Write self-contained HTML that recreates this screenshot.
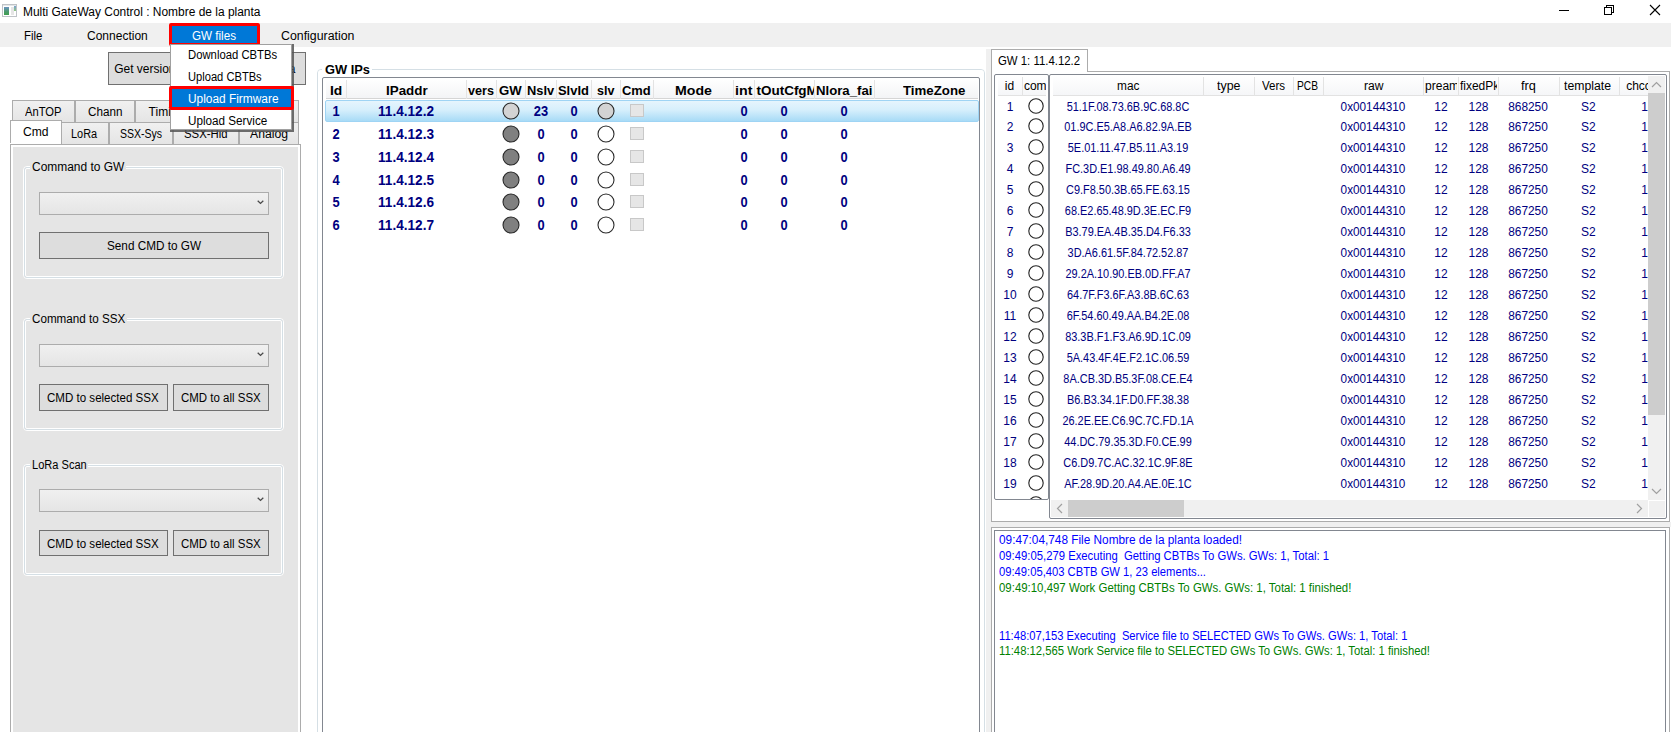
<!DOCTYPE html>
<html><head><meta charset="utf-8"><style>
html,body{margin:0;padding:0}
body{width:1671px;height:732px;position:relative;overflow:hidden;background:#fff;font-family:"Liberation Sans",sans-serif;font-size:12px;line-height:12px;color:#000}
body div, body svg{position:absolute}
.t{white-space:pre}
</style></head><body>
<div style="left:2px;top:4px;width:15px;height:13px;border:1px solid #bfc3c7;box-sizing:border-box;background:#fff"></div>
<div style="left:3px;top:5px;width:13px;height:1px;background:#e4e6e8"></div>
<div style="left:4px;top:7px;width:5px;height:8px;background:linear-gradient(#6a92c0,#4a9a6a 60%,#40a050)"></div>
<div style="left:11px;top:7px;width:3px;height:8px;background:#e6e6e6"></div>
<div style="left:14px;top:6px;width:2px;height:5px;background:linear-gradient(#7aa0d0,#90c880)"></div>
<div class="t" style="top:6.04px;font-size:12px;line-height:12px;font-weight:400;color:#000;left:23.40px;transform-origin:0 0;transform:scaleX(0.9965);">Multi GateWay Control : Nombre de la planta</div>
<div style="left:1559px;top:10px;width:10px;height:1px;background:#000"></div>
<div style="left:1606px;top:5px;width:8px;height:8px;border:1px solid #000;box-sizing:border-box;background:#fff"></div>
<div style="left:1604px;top:7px;width:8px;height:8px;border:1px solid #000;box-sizing:border-box;background:#fff"></div>
<svg style="left:1649px;top:4px" width="12" height="12"><path d="M1 1L11 11M11 1L1 11" stroke="#000" stroke-width="1.1"/></svg>
<div style="left:0px;top:23px;width:1671px;height:24px;background:#f0f0f0"></div>
<div class="t" style="top:30.04px;font-size:12px;line-height:12px;font-weight:400;color:#000;left:23.90px;transform-origin:0 0;transform:scaleX(0.9512);">File</div>
<div class="t" style="top:30.04px;font-size:12px;line-height:12px;font-weight:400;color:#000;left:86.80px;transform-origin:0 0;transform:scaleX(1.0013);">Connection</div>
<div class="t" style="top:30.04px;font-size:12px;line-height:12px;font-weight:400;color:#000;left:281.00px;transform-origin:0 0;transform:scaleX(1.0295);">Configuration</div>
<div style="left:108px;top:52px;width:198px;height:33px;background:#dddddd;border:1px solid #707070;box-sizing:border-box"></div>
<div class="t" style="top:63.04px;font-size:12px;line-height:12px;font-weight:400;color:#000;left:114.20px;">Get version</div>
<div class="t" style="top:63.04px;font-size:12px;line-height:12px;font-weight:400;color:#000;left:285.40px;">ta</div>
<div style="left:10px;top:144px;width:291px;height:590px;background:#fff;border:1px solid #acacac;box-sizing:border-box"></div>
<div style="left:13px;top:147px;width:285px;height:587px;background:#e5e5e5"></div>
<div style="left:12px;top:100px;width:63px;height:23px;background:linear-gradient(#f0f0f0,#e5e5e5);border:1px solid #acacac;box-sizing:border-box"></div>
<div class="t" style="top:106.04px;font-size:12px;line-height:12px;font-weight:400;color:#000;left:25.10px;transform-origin:0 0;transform:scaleX(0.9325);">AnTOP</div>
<div style="left:75px;top:100px;width:60px;height:23px;background:linear-gradient(#f0f0f0,#e5e5e5);border:1px solid #acacac;box-sizing:border-box"></div>
<div class="t" style="top:106.04px;font-size:12px;line-height:12px;font-weight:400;color:#000;left:87.90px;transform-origin:0 0;transform:scaleX(0.9724);">Chann</div>
<div style="left:135px;top:100px;width:164px;height:23px;background:linear-gradient(#f0f0f0,#e5e5e5);border:1px solid #acacac;box-sizing:border-box"></div>
<div class="t" style="top:106.04px;font-size:12px;line-height:12px;font-weight:400;color:#000;left:148.60px;">Timing</div>
<div style="left:61px;top:122px;width:48px;height:23px;background:linear-gradient(#f0f0f0,#e5e5e5);border:1px solid #acacac;box-sizing:border-box"></div>
<div class="t" style="top:128.04px;font-size:12px;line-height:12px;font-weight:400;color:#000;left:71.00px;transform-origin:0 0;transform:scaleX(0.9098);">LoRa</div>
<div style="left:109px;top:122px;width:64px;height:23px;background:linear-gradient(#f0f0f0,#e5e5e5);border:1px solid #acacac;box-sizing:border-box"></div>
<div class="t" style="top:128.04px;font-size:12px;line-height:12px;font-weight:400;color:#000;left:119.60px;transform-origin:0 0;transform:scaleX(0.8768);">SSX-Sys</div>
<div style="left:173px;top:122px;width:66px;height:23px;background:linear-gradient(#f0f0f0,#e5e5e5);border:1px solid #acacac;box-sizing:border-box"></div>
<div class="t" style="top:128.04px;font-size:12px;line-height:12px;font-weight:400;color:#000;left:184.00px;transform-origin:0 0;transform:scaleX(0.9475);">SSX-Hid</div>
<div style="left:239px;top:122px;width:60px;height:23px;background:linear-gradient(#f0f0f0,#e5e5e5);border:1px solid #acacac;box-sizing:border-box"></div>
<div class="t" style="top:128.04px;font-size:12px;line-height:12px;font-weight:400;color:#000;left:249.90px;transform-origin:0 0;transform:scaleX(1.0167);">Analog</div>
<div style="left:10px;top:120px;width:52px;height:23px;background:#fff;border:1px solid #acacac;border-bottom:none;box-sizing:border-box"></div>
<div class="t" style="top:126.04px;font-size:12px;line-height:12px;font-weight:400;color:#000;left:22.90px;transform-origin:0 0;transform:scaleX(1.0101);">Cmd</div>
<div style="left:23px;top:166px;width:261px;height:113px;border:1px solid #fff;border-radius:4px;box-sizing:border-box"></div>
<div style="left:24px;top:167px;width:259px;height:111px;border:1px solid #d5dfe5;border-radius:3px;box-sizing:border-box"></div>
<div style="left:25px;top:168px;width:257px;height:109px;border:1px solid #fff;border-radius:2px;box-sizing:border-box"></div>
<div style="left:30px;top:160px;width:96px;height:12px;background:#e5e5e5"></div>
<div class="t" style="top:161.04px;font-size:12px;line-height:12px;font-weight:400;color:#000;left:31.60px;transform-origin:0 0;transform:scaleX(0.9967);">Command to GW</div>
<div style="left:39px;top:192px;width:230px;height:23px;background:linear-gradient(#f0f0f0,#e5e5e5);border:1px solid #acacac;box-sizing:border-box"></div>
<svg style="left:257px;top:200.1px" width="8" height="6"><path d="M0.7 0.8L3.5 3.4L6.3 0.8" stroke="#4a4a4a" stroke-width="1.3" fill="none"/></svg>
<div style="left:39px;top:232px;width:230px;height:27px;background:#dddddd;border:1px solid #707070;box-sizing:border-box"></div>
<div class="t" style="top:240.04px;font-size:12px;line-height:12px;font-weight:400;color:#000;left:107.00px;transform-origin:0 0;transform:scaleX(0.9788);">Send CMD to GW</div>
<div style="left:23px;top:318px;width:261px;height:113px;border:1px solid #fff;border-radius:4px;box-sizing:border-box"></div>
<div style="left:24px;top:319px;width:259px;height:111px;border:1px solid #d5dfe5;border-radius:3px;box-sizing:border-box"></div>
<div style="left:25px;top:320px;width:257px;height:109px;border:1px solid #fff;border-radius:2px;box-sizing:border-box"></div>
<div style="left:30px;top:312px;width:97px;height:12px;background:#e5e5e5"></div>
<div class="t" style="top:313.04px;font-size:12px;line-height:12px;font-weight:400;color:#000;left:31.50px;transform-origin:0 0;transform:scaleX(0.9714);">Command to SSX</div>
<div style="left:39px;top:344px;width:230px;height:23px;background:linear-gradient(#f0f0f0,#e5e5e5);border:1px solid #acacac;box-sizing:border-box"></div>
<svg style="left:257px;top:352.1px" width="8" height="6"><path d="M0.7 0.8L3.5 3.4L6.3 0.8" stroke="#4a4a4a" stroke-width="1.3" fill="none"/></svg>
<div style="left:39px;top:384px;width:129px;height:27px;background:#dddddd;border:1px solid #707070;box-sizing:border-box"></div>
<div class="t" style="top:392.04px;font-size:12px;line-height:12px;font-weight:400;color:#000;left:47.30px;transform-origin:0 0;transform:scaleX(0.9625);">CMD to selected SSX</div>
<div style="left:173px;top:384px;width:96px;height:27px;background:#dddddd;border:1px solid #707070;box-sizing:border-box"></div>
<div class="t" style="top:392.04px;font-size:12px;line-height:12px;font-weight:400;color:#000;left:181.20px;transform-origin:0 0;transform:scaleX(0.9561);">CMD to all SSX</div>
<div style="left:23px;top:464px;width:261px;height:112px;border:1px solid #fff;border-radius:4px;box-sizing:border-box"></div>
<div style="left:24px;top:465px;width:259px;height:110px;border:1px solid #d5dfe5;border-radius:3px;box-sizing:border-box"></div>
<div style="left:25px;top:466px;width:257px;height:108px;border:1px solid #fff;border-radius:2px;box-sizing:border-box"></div>
<div style="left:30px;top:458px;width:58px;height:12px;background:#e5e5e5"></div>
<div class="t" style="top:459.04px;font-size:12px;line-height:12px;font-weight:400;color:#000;left:31.50px;transform-origin:0 0;transform:scaleX(0.9213);">LoRa Scan</div>
<div style="left:39px;top:489px;width:230px;height:23px;background:linear-gradient(#f0f0f0,#e5e5e5);border:1px solid #acacac;box-sizing:border-box"></div>
<svg style="left:257px;top:497.1px" width="8" height="6"><path d="M0.7 0.8L3.5 3.4L6.3 0.8" stroke="#4a4a4a" stroke-width="1.3" fill="none"/></svg>
<div style="left:39px;top:530px;width:129px;height:26px;background:#dddddd;border:1px solid #707070;box-sizing:border-box"></div>
<div class="t" style="top:538.04px;font-size:12px;line-height:12px;font-weight:400;color:#000;left:47.30px;transform-origin:0 0;transform:scaleX(0.9625);">CMD to selected SSX</div>
<div style="left:173px;top:530px;width:96px;height:26px;background:#dddddd;border:1px solid #707070;box-sizing:border-box"></div>
<div class="t" style="top:538.04px;font-size:12px;line-height:12px;font-weight:400;color:#000;left:181.20px;transform-origin:0 0;transform:scaleX(0.9561);">CMD to all SSX</div>
<div style="left:317px;top:69px;width:668px;height:668px;border:1px solid #d5dfe5;border-radius:4px;box-sizing:border-box"></div>
<div style="left:318px;top:70px;width:666px;height:667px;border:1px solid #fff;border-radius:3px;box-sizing:border-box"></div>
<div style="left:322px;top:60px;width:50px;height:12px;background:#fff"></div>
<div class="t" style="top:62.77px;font-size:13.5px;line-height:13.5px;font-weight:700;color:#000;left:325.10px;transform-origin:0 0;transform:scaleX(0.9521);">GW IPs</div>
<div style="left:322px;top:77px;width:658px;height:660px;border:1px solid #828790;border-radius:2px;box-sizing:border-box;background:#fff"></div>
<div style="left:326px;top:79px;width:652px;height:20px;background:linear-gradient(#ffffff,#f3f4f6);border-bottom:1px solid #d5d5d5;box-sizing:border-box"></div>
<div style="left:346px;top:80px;width:1px;height:19px;background:#e3e3e3"></div>
<div style="left:466px;top:80px;width:1px;height:19px;background:#e3e3e3"></div>
<div style="left:496px;top:80px;width:1px;height:19px;background:#e3e3e3"></div>
<div style="left:525px;top:80px;width:1px;height:19px;background:#e3e3e3"></div>
<div style="left:556px;top:80px;width:1px;height:19px;background:#e3e3e3"></div>
<div style="left:591px;top:80px;width:1px;height:19px;background:#e3e3e3"></div>
<div style="left:620px;top:80px;width:1px;height:19px;background:#e3e3e3"></div>
<div style="left:653px;top:80px;width:1px;height:19px;background:#e3e3e3"></div>
<div style="left:733px;top:80px;width:1px;height:19px;background:#e3e3e3"></div>
<div style="left:754px;top:80px;width:1px;height:19px;background:#e3e3e3"></div>
<div style="left:814px;top:80px;width:1px;height:19px;background:#e3e3e3"></div>
<div style="left:874px;top:80px;width:1px;height:19px;background:#e3e3e3"></div>
<div class="t" style="top:83.77px;font-size:13.5px;line-height:13.5px;font-weight:700;color:#000;left:329.90px;transform-origin:0 0;transform:scaleX(1.0250);">Id</div>
<div class="t" style="top:83.77px;font-size:13.5px;line-height:13.5px;font-weight:700;color:#000;left:385.50px;transform-origin:0 0;transform:scaleX(0.9925);">IPaddr</div>
<div class="t" style="top:83.77px;font-size:13.5px;line-height:13.5px;font-weight:700;color:#000;left:467.70px;transform-origin:0 0;transform:scaleX(0.9359);">vers</div>
<div class="t" style="top:83.77px;font-size:13.5px;line-height:13.5px;font-weight:700;color:#000;left:498.70px;transform-origin:0 0;transform:scaleX(0.9763);">GW</div>
<div class="t" style="top:83.77px;font-size:13.5px;line-height:13.5px;font-weight:700;color:#000;left:527.10px;transform-origin:0 0;transform:scaleX(0.9533);">Nslv</div>
<div class="t" style="top:83.77px;font-size:13.5px;line-height:13.5px;font-weight:700;color:#000;left:558.10px;transform-origin:0 0;transform:scaleX(0.9577);">SlvId</div>
<div class="t" style="top:83.77px;font-size:13.5px;line-height:13.5px;font-weight:700;color:#000;left:597.00px;transform-origin:0 0;transform:scaleX(0.9265);">slv</div>
<div class="t" style="top:83.77px;font-size:13.5px;line-height:13.5px;font-weight:700;color:#000;left:622.40px;transform-origin:0 0;transform:scaleX(0.9567);">Cmd</div>
<div class="t" style="top:83.77px;font-size:13.5px;line-height:13.5px;font-weight:700;color:#000;left:674.80px;transform-origin:0 0;transform:scaleX(1.0468);">Mode</div>
<div class="t" style="top:83.77px;font-size:13.5px;line-height:13.5px;font-weight:700;color:#000;left:735.10px;transform-origin:0 0;transform:scaleX(1.0545);">int</div>
<div class="t" style="top:83.77px;font-size:13.5px;line-height:13.5px;font-weight:700;color:#000;left:903.20px;transform-origin:0 0;transform:scaleX(0.9824);">TimeZone</div>
<div style="left:756px;top:80px;width:57.5px;height:19px;overflow:hidden"><div class="t" style="top:3.77px;font-size:13.5px;line-height:13.5px;font-weight:700;color:#000;left:0.40px;transform-origin:0 0;transform:scaleX(1.0000);">tOutCfgM</div></div>
<div style="left:816px;top:80px;width:57px;height:19px;overflow:hidden"><div class="t" style="top:3.77px;font-size:13.5px;line-height:13.5px;font-weight:700;color:#000;left:0.40px;transform-origin:0 0;transform:scaleX(0.9760);">Nlora_fail</div></div>
<div style="left:324.5px;top:100px;width:654px;height:21.5px;background:linear-gradient(#e6f5fd,#d6effc 45%,#a8dbf6);border:1px solid #9fd4f4;border-radius:2px;box-sizing:border-box"></div>
<div class="t" style="top:104.35px;font-size:14px;line-height:14px;font-weight:700;color:#000080;left:336px;transform:translateX(-50%) scaleX(0.9200);">1</div>
<div class="t" style="top:104.35px;font-size:14px;line-height:14px;font-weight:700;color:#000080;left:378.20px;transform-origin:0 0;transform:scaleX(0.9718);">11.4.12.2</div>
<svg style="left:501.5px;top:101.85px" width="18" height="18"><circle cx="9" cy="9" r="8" fill="#d3d3d3" stroke="#2a2a2a" stroke-width="1.1"/></svg>
<div class="t" style="top:104.35px;font-size:14px;line-height:14px;font-weight:700;color:#000080;left:540.5px;transform:translateX(-50%) scaleX(0.9200);">23</div>
<div class="t" style="top:104.35px;font-size:14px;line-height:14px;font-weight:700;color:#000080;left:573.5px;transform:translateX(-50%) scaleX(0.9200);">0</div>
<svg style="left:597px;top:101.85px" width="18" height="18"><circle cx="9" cy="9" r="8" fill="#d3d3d3" stroke="#2a2a2a" stroke-width="1.1"/></svg>
<div style="left:630px;top:104px;width:14px;height:13px;background:#e6e6e6;border:1px solid #c8c8c8;box-sizing:border-box"></div>
<div class="t" style="top:104.35px;font-size:14px;line-height:14px;font-weight:700;color:#000080;left:743.8px;transform:translateX(-50%) scaleX(0.9200);">0</div>
<div class="t" style="top:104.35px;font-size:14px;line-height:14px;font-weight:700;color:#000080;left:784.3px;transform:translateX(-50%) scaleX(0.9200);">0</div>
<div class="t" style="top:104.35px;font-size:14px;line-height:14px;font-weight:700;color:#000080;left:844.3px;transform:translateX(-50%) scaleX(0.9200);">0</div>
<div class="t" style="top:127.35px;font-size:14px;line-height:14px;font-weight:700;color:#000080;left:336px;transform:translateX(-50%) scaleX(0.9200);">2</div>
<div class="t" style="top:127.35px;font-size:14px;line-height:14px;font-weight:700;color:#000080;left:378.20px;transform-origin:0 0;transform:scaleX(0.9718);">11.4.12.3</div>
<svg style="left:501.5px;top:124.85px" width="18" height="18"><circle cx="9" cy="9" r="8" fill="#808080" stroke="#2a2a2a" stroke-width="1.1"/></svg>
<div class="t" style="top:127.35px;font-size:14px;line-height:14px;font-weight:700;color:#000080;left:540.5px;transform:translateX(-50%) scaleX(0.9200);">0</div>
<div class="t" style="top:127.35px;font-size:14px;line-height:14px;font-weight:700;color:#000080;left:573.5px;transform:translateX(-50%) scaleX(0.9200);">0</div>
<svg style="left:597px;top:124.85px" width="18" height="18"><circle cx="9" cy="9" r="8" fill="#ffffff" stroke="#2a2a2a" stroke-width="1.1"/></svg>
<div style="left:630px;top:127px;width:14px;height:13px;background:#e6e6e6;border:1px solid #c8c8c8;box-sizing:border-box"></div>
<div class="t" style="top:127.35px;font-size:14px;line-height:14px;font-weight:700;color:#000080;left:743.8px;transform:translateX(-50%) scaleX(0.9200);">0</div>
<div class="t" style="top:127.35px;font-size:14px;line-height:14px;font-weight:700;color:#000080;left:784.3px;transform:translateX(-50%) scaleX(0.9200);">0</div>
<div class="t" style="top:127.35px;font-size:14px;line-height:14px;font-weight:700;color:#000080;left:844.3px;transform:translateX(-50%) scaleX(0.9200);">0</div>
<div class="t" style="top:150.35px;font-size:14px;line-height:14px;font-weight:700;color:#000080;left:336px;transform:translateX(-50%) scaleX(0.9200);">3</div>
<div class="t" style="top:150.35px;font-size:14px;line-height:14px;font-weight:700;color:#000080;left:378.20px;transform-origin:0 0;transform:scaleX(0.9718);">11.4.12.4</div>
<svg style="left:501.5px;top:147.85px" width="18" height="18"><circle cx="9" cy="9" r="8" fill="#808080" stroke="#2a2a2a" stroke-width="1.1"/></svg>
<div class="t" style="top:150.35px;font-size:14px;line-height:14px;font-weight:700;color:#000080;left:540.5px;transform:translateX(-50%) scaleX(0.9200);">0</div>
<div class="t" style="top:150.35px;font-size:14px;line-height:14px;font-weight:700;color:#000080;left:573.5px;transform:translateX(-50%) scaleX(0.9200);">0</div>
<svg style="left:597px;top:147.85px" width="18" height="18"><circle cx="9" cy="9" r="8" fill="#ffffff" stroke="#2a2a2a" stroke-width="1.1"/></svg>
<div style="left:630px;top:150px;width:14px;height:13px;background:#e6e6e6;border:1px solid #c8c8c8;box-sizing:border-box"></div>
<div class="t" style="top:150.35px;font-size:14px;line-height:14px;font-weight:700;color:#000080;left:743.8px;transform:translateX(-50%) scaleX(0.9200);">0</div>
<div class="t" style="top:150.35px;font-size:14px;line-height:14px;font-weight:700;color:#000080;left:784.3px;transform:translateX(-50%) scaleX(0.9200);">0</div>
<div class="t" style="top:150.35px;font-size:14px;line-height:14px;font-weight:700;color:#000080;left:844.3px;transform:translateX(-50%) scaleX(0.9200);">0</div>
<div class="t" style="top:173.35px;font-size:14px;line-height:14px;font-weight:700;color:#000080;left:336px;transform:translateX(-50%) scaleX(0.9200);">4</div>
<div class="t" style="top:173.35px;font-size:14px;line-height:14px;font-weight:700;color:#000080;left:378.20px;transform-origin:0 0;transform:scaleX(0.9718);">11.4.12.5</div>
<svg style="left:501.5px;top:170.85px" width="18" height="18"><circle cx="9" cy="9" r="8" fill="#808080" stroke="#2a2a2a" stroke-width="1.1"/></svg>
<div class="t" style="top:173.35px;font-size:14px;line-height:14px;font-weight:700;color:#000080;left:540.5px;transform:translateX(-50%) scaleX(0.9200);">0</div>
<div class="t" style="top:173.35px;font-size:14px;line-height:14px;font-weight:700;color:#000080;left:573.5px;transform:translateX(-50%) scaleX(0.9200);">0</div>
<svg style="left:597px;top:170.85px" width="18" height="18"><circle cx="9" cy="9" r="8" fill="#ffffff" stroke="#2a2a2a" stroke-width="1.1"/></svg>
<div style="left:630px;top:173px;width:14px;height:13px;background:#e6e6e6;border:1px solid #c8c8c8;box-sizing:border-box"></div>
<div class="t" style="top:173.35px;font-size:14px;line-height:14px;font-weight:700;color:#000080;left:743.8px;transform:translateX(-50%) scaleX(0.9200);">0</div>
<div class="t" style="top:173.35px;font-size:14px;line-height:14px;font-weight:700;color:#000080;left:784.3px;transform:translateX(-50%) scaleX(0.9200);">0</div>
<div class="t" style="top:173.35px;font-size:14px;line-height:14px;font-weight:700;color:#000080;left:844.3px;transform:translateX(-50%) scaleX(0.9200);">0</div>
<div class="t" style="top:195.35px;font-size:14px;line-height:14px;font-weight:700;color:#000080;left:336px;transform:translateX(-50%) scaleX(0.9200);">5</div>
<div class="t" style="top:195.35px;font-size:14px;line-height:14px;font-weight:700;color:#000080;left:378.20px;transform-origin:0 0;transform:scaleX(0.9718);">11.4.12.6</div>
<svg style="left:501.5px;top:192.85px" width="18" height="18"><circle cx="9" cy="9" r="8" fill="#808080" stroke="#2a2a2a" stroke-width="1.1"/></svg>
<div class="t" style="top:195.35px;font-size:14px;line-height:14px;font-weight:700;color:#000080;left:540.5px;transform:translateX(-50%) scaleX(0.9200);">0</div>
<div class="t" style="top:195.35px;font-size:14px;line-height:14px;font-weight:700;color:#000080;left:573.5px;transform:translateX(-50%) scaleX(0.9200);">0</div>
<svg style="left:597px;top:192.85px" width="18" height="18"><circle cx="9" cy="9" r="8" fill="#ffffff" stroke="#2a2a2a" stroke-width="1.1"/></svg>
<div style="left:630px;top:195px;width:14px;height:13px;background:#e6e6e6;border:1px solid #c8c8c8;box-sizing:border-box"></div>
<div class="t" style="top:195.35px;font-size:14px;line-height:14px;font-weight:700;color:#000080;left:743.8px;transform:translateX(-50%) scaleX(0.9200);">0</div>
<div class="t" style="top:195.35px;font-size:14px;line-height:14px;font-weight:700;color:#000080;left:784.3px;transform:translateX(-50%) scaleX(0.9200);">0</div>
<div class="t" style="top:195.35px;font-size:14px;line-height:14px;font-weight:700;color:#000080;left:844.3px;transform:translateX(-50%) scaleX(0.9200);">0</div>
<div class="t" style="top:218.35px;font-size:14px;line-height:14px;font-weight:700;color:#000080;left:336px;transform:translateX(-50%) scaleX(0.9200);">6</div>
<div class="t" style="top:218.35px;font-size:14px;line-height:14px;font-weight:700;color:#000080;left:378.20px;transform-origin:0 0;transform:scaleX(0.9718);">11.4.12.7</div>
<svg style="left:501.5px;top:215.85px" width="18" height="18"><circle cx="9" cy="9" r="8" fill="#808080" stroke="#2a2a2a" stroke-width="1.1"/></svg>
<div class="t" style="top:218.35px;font-size:14px;line-height:14px;font-weight:700;color:#000080;left:540.5px;transform:translateX(-50%) scaleX(0.9200);">0</div>
<div class="t" style="top:218.35px;font-size:14px;line-height:14px;font-weight:700;color:#000080;left:573.5px;transform:translateX(-50%) scaleX(0.9200);">0</div>
<svg style="left:597px;top:215.85px" width="18" height="18"><circle cx="9" cy="9" r="8" fill="#ffffff" stroke="#2a2a2a" stroke-width="1.1"/></svg>
<div style="left:630px;top:218px;width:14px;height:13px;background:#e6e6e6;border:1px solid #c8c8c8;box-sizing:border-box"></div>
<div class="t" style="top:218.35px;font-size:14px;line-height:14px;font-weight:700;color:#000080;left:743.8px;transform:translateX(-50%) scaleX(0.9200);">0</div>
<div class="t" style="top:218.35px;font-size:14px;line-height:14px;font-weight:700;color:#000080;left:784.3px;transform:translateX(-50%) scaleX(0.9200);">0</div>
<div class="t" style="top:218.35px;font-size:14px;line-height:14px;font-weight:700;color:#000080;left:844.3px;transform:translateX(-50%) scaleX(0.9200);">0</div>
<div style="left:986px;top:49px;width:5px;height:683px;background:#f0f0f0"></div>
<div style="left:991px;top:522px;width:680px;height:5px;background:#f0f0f0"></div>
<div style="left:991px;top:71px;width:679px;height:451px;border:1px solid #acacac;box-sizing:border-box;background:#fff"></div>
<div style="left:991px;top:49px;width:97px;height:23px;background:#fff;border:1px solid #acacac;border-bottom:none;box-sizing:border-box"></div>
<div class="t" style="top:55.04px;font-size:12px;line-height:12px;font-weight:400;color:#000;left:998.20px;transform-origin:0 0;transform:scaleX(0.9491);">GW 1: 11.4.12.2</div>
<div style="left:994px;top:74px;width:55px;height:426px;border:1px solid #828790;border-radius:2px;box-sizing:border-box;background:#fff"></div>
<div style="left:998px;top:76px;width:48px;height:20px;background:linear-gradient(#ffffff,#f5f6f8);border-bottom:1px solid #e2e2e2;box-sizing:border-box"></div>
<div style="left:1022px;top:77px;width:1px;height:19px;background:#e3e3e3"></div>
<div class="t" style="top:80.04px;font-size:12px;line-height:12px;font-weight:400;color:#000;left:1004.80px;">id</div>
<div style="left:1023px;top:76px;width:23px;height:19px;overflow:hidden"><div class="t" style="top:4.04px;font-size:12px;line-height:12px;font-weight:400;color:#000;left:0.90px;">com</div></div>
<div style="left:1049px;top:74px;width:618px;height:445px;border:1px solid #828790;border-radius:2px;box-sizing:border-box;background:#fff"></div>
<div style="left:1053px;top:76px;width:595px;height:20px;background:linear-gradient(#ffffff,#f5f6f8);border-bottom:1px solid #e2e2e2;box-sizing:border-box"></div>
<div style="left:1203px;top:77px;width:1px;height:19px;background:#e3e3e3"></div>
<div style="left:1254px;top:77px;width:1px;height:19px;background:#e3e3e3"></div>
<div style="left:1293px;top:77px;width:1px;height:19px;background:#e3e3e3"></div>
<div style="left:1323px;top:77px;width:1px;height:19px;background:#e3e3e3"></div>
<div style="left:1423px;top:77px;width:1px;height:19px;background:#e3e3e3"></div>
<div style="left:1458px;top:77px;width:1px;height:19px;background:#e3e3e3"></div>
<div style="left:1498px;top:77px;width:1px;height:19px;background:#e3e3e3"></div>
<div style="left:1559px;top:77px;width:1px;height:19px;background:#e3e3e3"></div>
<div style="left:1619px;top:77px;width:1px;height:19px;background:#e3e3e3"></div>
<div class="t" style="top:80.04px;font-size:12px;line-height:12px;font-weight:400;color:#000;left:1117.00px;transform-origin:0 0;transform:scaleX(0.9880);">mac</div>
<div class="t" style="top:80.04px;font-size:12px;line-height:12px;font-weight:400;color:#000;left:1216.50px;transform-origin:0 0;transform:scaleX(1.0314);">type</div>
<div class="t" style="top:80.04px;font-size:12px;line-height:12px;font-weight:400;color:#000;left:1261.50px;transform-origin:0 0;transform:scaleX(0.9619);">Vers</div>
<div class="t" style="top:80.04px;font-size:12px;line-height:12px;font-weight:400;color:#000;left:1297.40px;transform-origin:0 0;transform:scaleX(0.8506);">PCB</div>
<div class="t" style="top:80.04px;font-size:12px;line-height:12px;font-weight:400;color:#000;left:1363.50px;transform-origin:0 0;transform:scaleX(1.0081);">raw</div>
<div class="t" style="top:80.04px;font-size:12px;line-height:12px;font-weight:400;color:#000;left:1520.70px;transform-origin:0 0;transform:scaleX(1.0631);">frq</div>
<div class="t" style="top:80.04px;font-size:12px;line-height:12px;font-weight:400;color:#000;left:1564.40px;transform-origin:0 0;transform:scaleX(1.0210);">template</div>
<div style="left:1424px;top:77px;width:33px;height:18px;overflow:hidden"><div class="t" style="top:3.04px;font-size:12px;line-height:12px;font-weight:400;color:#000;left:1.10px;">preamble</div></div>
<div style="left:1459px;top:77px;width:38px;height:18px;overflow:hidden"><div class="t" style="top:3.04px;font-size:12px;line-height:12px;font-weight:400;color:#000;left:0.90px;">fixedPkt</div></div>
<div style="left:1619px;top:77px;width:29px;height:18px;overflow:hidden"><div class="t" style="top:3.04px;font-size:12px;line-height:12px;font-weight:400;color:#000;left:7.20px;">chcc</div></div>
<div style="left:995px;top:96px;width:53px;height:403px;overflow:hidden">
<svg style="left:33.2px;top:1.50px" width="16" height="16"><circle cx="8" cy="8" r="7.2" fill="#fff" stroke="#222" stroke-width="1.1"/></svg>
<div class="t" style="left:15.0px;top:5.04px;transform:translateX(-50%);color:#000080">1</div>
<svg style="left:33.2px;top:21.50px" width="16" height="16"><circle cx="8" cy="8" r="7.2" fill="#fff" stroke="#222" stroke-width="1.1"/></svg>
<div class="t" style="left:15.0px;top:25.04px;transform:translateX(-50%);color:#000080">2</div>
<svg style="left:33.2px;top:42.50px" width="16" height="16"><circle cx="8" cy="8" r="7.2" fill="#fff" stroke="#222" stroke-width="1.1"/></svg>
<div class="t" style="left:15.0px;top:46.04px;transform:translateX(-50%);color:#000080">3</div>
<svg style="left:33.2px;top:63.50px" width="16" height="16"><circle cx="8" cy="8" r="7.2" fill="#fff" stroke="#222" stroke-width="1.1"/></svg>
<div class="t" style="left:15.0px;top:67.04px;transform:translateX(-50%);color:#000080">4</div>
<svg style="left:33.2px;top:84.50px" width="16" height="16"><circle cx="8" cy="8" r="7.2" fill="#fff" stroke="#222" stroke-width="1.1"/></svg>
<div class="t" style="left:15.0px;top:88.04px;transform:translateX(-50%);color:#000080">5</div>
<svg style="left:33.2px;top:105.50px" width="16" height="16"><circle cx="8" cy="8" r="7.2" fill="#fff" stroke="#222" stroke-width="1.1"/></svg>
<div class="t" style="left:15.0px;top:109.04px;transform:translateX(-50%);color:#000080">6</div>
<svg style="left:33.2px;top:126.50px" width="16" height="16"><circle cx="8" cy="8" r="7.2" fill="#fff" stroke="#222" stroke-width="1.1"/></svg>
<div class="t" style="left:15.0px;top:130.04px;transform:translateX(-50%);color:#000080">7</div>
<svg style="left:33.2px;top:147.50px" width="16" height="16"><circle cx="8" cy="8" r="7.2" fill="#fff" stroke="#222" stroke-width="1.1"/></svg>
<div class="t" style="left:15.0px;top:151.04px;transform:translateX(-50%);color:#000080">8</div>
<svg style="left:33.2px;top:168.50px" width="16" height="16"><circle cx="8" cy="8" r="7.2" fill="#fff" stroke="#222" stroke-width="1.1"/></svg>
<div class="t" style="left:15.0px;top:172.04px;transform:translateX(-50%);color:#000080">9</div>
<svg style="left:33.2px;top:189.50px" width="16" height="16"><circle cx="8" cy="8" r="7.2" fill="#fff" stroke="#222" stroke-width="1.1"/></svg>
<div class="t" style="left:15.0px;top:193.04px;transform:translateX(-50%);color:#000080">10</div>
<svg style="left:33.2px;top:210.50px" width="16" height="16"><circle cx="8" cy="8" r="7.2" fill="#fff" stroke="#222" stroke-width="1.1"/></svg>
<div class="t" style="left:15.0px;top:214.04px;transform:translateX(-50%);color:#000080">11</div>
<svg style="left:33.2px;top:231.50px" width="16" height="16"><circle cx="8" cy="8" r="7.2" fill="#fff" stroke="#222" stroke-width="1.1"/></svg>
<div class="t" style="left:15.0px;top:235.04px;transform:translateX(-50%);color:#000080">12</div>
<svg style="left:33.2px;top:252.50px" width="16" height="16"><circle cx="8" cy="8" r="7.2" fill="#fff" stroke="#222" stroke-width="1.1"/></svg>
<div class="t" style="left:15.0px;top:256.04px;transform:translateX(-50%);color:#000080">13</div>
<svg style="left:33.2px;top:273.50px" width="16" height="16"><circle cx="8" cy="8" r="7.2" fill="#fff" stroke="#222" stroke-width="1.1"/></svg>
<div class="t" style="left:15.0px;top:277.04px;transform:translateX(-50%);color:#000080">14</div>
<svg style="left:33.2px;top:294.50px" width="16" height="16"><circle cx="8" cy="8" r="7.2" fill="#fff" stroke="#222" stroke-width="1.1"/></svg>
<div class="t" style="left:15.0px;top:298.04px;transform:translateX(-50%);color:#000080">15</div>
<svg style="left:33.2px;top:315.50px" width="16" height="16"><circle cx="8" cy="8" r="7.2" fill="#fff" stroke="#222" stroke-width="1.1"/></svg>
<div class="t" style="left:15.0px;top:319.04px;transform:translateX(-50%);color:#000080">16</div>
<svg style="left:33.2px;top:336.50px" width="16" height="16"><circle cx="8" cy="8" r="7.2" fill="#fff" stroke="#222" stroke-width="1.1"/></svg>
<div class="t" style="left:15.0px;top:340.04px;transform:translateX(-50%);color:#000080">17</div>
<svg style="left:33.2px;top:357.50px" width="16" height="16"><circle cx="8" cy="8" r="7.2" fill="#fff" stroke="#222" stroke-width="1.1"/></svg>
<div class="t" style="left:15.0px;top:361.04px;transform:translateX(-50%);color:#000080">18</div>
<svg style="left:33.2px;top:378.50px" width="16" height="16"><circle cx="8" cy="8" r="7.2" fill="#fff" stroke="#222" stroke-width="1.1"/></svg>
<div class="t" style="left:15.0px;top:382.04px;transform:translateX(-50%);color:#000080">19</div>
<svg style="left:33.2px;top:399.50px" width="16" height="16"><circle cx="8" cy="8" r="7.2" fill="#fff" stroke="#222" stroke-width="1.1"/></svg>
<div class="t" style="left:15.0px;top:403.04px;transform:translateX(-50%);color:#000080">20</div>
</div>
<div style="left:1050px;top:96px;width:598px;height:404px;overflow:hidden">
<div class="t" style="left:78.1px;top:5.04px;transform:translateX(-50%) scaleX(0.91);color:#000080">51.1F.08.73.6B.9C.68.8C</div>
<div class="t" style="left:323.1px;top:5.04px;transform:translateX(-50%) scaleX(0.98);color:#000080">0x00144310</div>
<div class="t" style="left:391.0px;top:5.04px;transform:translateX(-50%);color:#000080">12</div>
<div class="t" style="left:428.5px;top:5.04px;transform:translateX(-50%);color:#000080">128</div>
<div class="t" style="left:478.1px;top:5.04px;transform:translateX(-50%) scaleX(0.99);color:#000080">868250</div>
<div class="t" style="left:538.3px;top:5.04px;transform:translateX(-50%);color:#000080">S2</div>
<div class="t" style="left:594.5px;top:5.04px;transform:translateX(-50%);color:#000080">1</div>
<div class="t" style="left:78.1px;top:25.04px;transform:translateX(-50%) scaleX(0.91);color:#000080">01.9C.E5.A8.A6.82.9A.EB</div>
<div class="t" style="left:323.1px;top:25.04px;transform:translateX(-50%) scaleX(0.98);color:#000080">0x00144310</div>
<div class="t" style="left:391.0px;top:25.04px;transform:translateX(-50%);color:#000080">12</div>
<div class="t" style="left:428.5px;top:25.04px;transform:translateX(-50%);color:#000080">128</div>
<div class="t" style="left:478.1px;top:25.04px;transform:translateX(-50%) scaleX(0.99);color:#000080">867250</div>
<div class="t" style="left:538.3px;top:25.04px;transform:translateX(-50%);color:#000080">S2</div>
<div class="t" style="left:594.5px;top:25.04px;transform:translateX(-50%);color:#000080">1</div>
<div class="t" style="left:78.1px;top:46.04px;transform:translateX(-50%) scaleX(0.91);color:#000080">5E.01.11.47.B5.11.A3.19</div>
<div class="t" style="left:323.1px;top:46.04px;transform:translateX(-50%) scaleX(0.98);color:#000080">0x00144310</div>
<div class="t" style="left:391.0px;top:46.04px;transform:translateX(-50%);color:#000080">12</div>
<div class="t" style="left:428.5px;top:46.04px;transform:translateX(-50%);color:#000080">128</div>
<div class="t" style="left:478.1px;top:46.04px;transform:translateX(-50%) scaleX(0.99);color:#000080">867250</div>
<div class="t" style="left:538.3px;top:46.04px;transform:translateX(-50%);color:#000080">S2</div>
<div class="t" style="left:594.5px;top:46.04px;transform:translateX(-50%);color:#000080">1</div>
<div class="t" style="left:78.1px;top:67.04px;transform:translateX(-50%) scaleX(0.91);color:#000080">FC.3D.E1.98.49.80.A6.49</div>
<div class="t" style="left:323.1px;top:67.04px;transform:translateX(-50%) scaleX(0.98);color:#000080">0x00144310</div>
<div class="t" style="left:391.0px;top:67.04px;transform:translateX(-50%);color:#000080">12</div>
<div class="t" style="left:428.5px;top:67.04px;transform:translateX(-50%);color:#000080">128</div>
<div class="t" style="left:478.1px;top:67.04px;transform:translateX(-50%) scaleX(0.99);color:#000080">867250</div>
<div class="t" style="left:538.3px;top:67.04px;transform:translateX(-50%);color:#000080">S2</div>
<div class="t" style="left:594.5px;top:67.04px;transform:translateX(-50%);color:#000080">1</div>
<div class="t" style="left:78.1px;top:88.04px;transform:translateX(-50%) scaleX(0.91);color:#000080">C9.F8.50.3B.65.FE.63.15</div>
<div class="t" style="left:323.1px;top:88.04px;transform:translateX(-50%) scaleX(0.98);color:#000080">0x00144310</div>
<div class="t" style="left:391.0px;top:88.04px;transform:translateX(-50%);color:#000080">12</div>
<div class="t" style="left:428.5px;top:88.04px;transform:translateX(-50%);color:#000080">128</div>
<div class="t" style="left:478.1px;top:88.04px;transform:translateX(-50%) scaleX(0.99);color:#000080">867250</div>
<div class="t" style="left:538.3px;top:88.04px;transform:translateX(-50%);color:#000080">S2</div>
<div class="t" style="left:594.5px;top:88.04px;transform:translateX(-50%);color:#000080">1</div>
<div class="t" style="left:78.1px;top:109.04px;transform:translateX(-50%) scaleX(0.91);color:#000080">68.E2.65.48.9D.3E.EC.F9</div>
<div class="t" style="left:323.1px;top:109.04px;transform:translateX(-50%) scaleX(0.98);color:#000080">0x00144310</div>
<div class="t" style="left:391.0px;top:109.04px;transform:translateX(-50%);color:#000080">12</div>
<div class="t" style="left:428.5px;top:109.04px;transform:translateX(-50%);color:#000080">128</div>
<div class="t" style="left:478.1px;top:109.04px;transform:translateX(-50%) scaleX(0.99);color:#000080">867250</div>
<div class="t" style="left:538.3px;top:109.04px;transform:translateX(-50%);color:#000080">S2</div>
<div class="t" style="left:594.5px;top:109.04px;transform:translateX(-50%);color:#000080">1</div>
<div class="t" style="left:78.1px;top:130.04px;transform:translateX(-50%) scaleX(0.91);color:#000080">B3.79.EA.4B.35.D4.F6.33</div>
<div class="t" style="left:323.1px;top:130.04px;transform:translateX(-50%) scaleX(0.98);color:#000080">0x00144310</div>
<div class="t" style="left:391.0px;top:130.04px;transform:translateX(-50%);color:#000080">12</div>
<div class="t" style="left:428.5px;top:130.04px;transform:translateX(-50%);color:#000080">128</div>
<div class="t" style="left:478.1px;top:130.04px;transform:translateX(-50%) scaleX(0.99);color:#000080">867250</div>
<div class="t" style="left:538.3px;top:130.04px;transform:translateX(-50%);color:#000080">S2</div>
<div class="t" style="left:594.5px;top:130.04px;transform:translateX(-50%);color:#000080">1</div>
<div class="t" style="left:78.1px;top:151.04px;transform:translateX(-50%) scaleX(0.91);color:#000080">3D.A6.61.5F.84.72.52.87</div>
<div class="t" style="left:323.1px;top:151.04px;transform:translateX(-50%) scaleX(0.98);color:#000080">0x00144310</div>
<div class="t" style="left:391.0px;top:151.04px;transform:translateX(-50%);color:#000080">12</div>
<div class="t" style="left:428.5px;top:151.04px;transform:translateX(-50%);color:#000080">128</div>
<div class="t" style="left:478.1px;top:151.04px;transform:translateX(-50%) scaleX(0.99);color:#000080">867250</div>
<div class="t" style="left:538.3px;top:151.04px;transform:translateX(-50%);color:#000080">S2</div>
<div class="t" style="left:594.5px;top:151.04px;transform:translateX(-50%);color:#000080">1</div>
<div class="t" style="left:78.1px;top:172.04px;transform:translateX(-50%) scaleX(0.91);color:#000080">29.2A.10.90.EB.0D.FF.A7</div>
<div class="t" style="left:323.1px;top:172.04px;transform:translateX(-50%) scaleX(0.98);color:#000080">0x00144310</div>
<div class="t" style="left:391.0px;top:172.04px;transform:translateX(-50%);color:#000080">12</div>
<div class="t" style="left:428.5px;top:172.04px;transform:translateX(-50%);color:#000080">128</div>
<div class="t" style="left:478.1px;top:172.04px;transform:translateX(-50%) scaleX(0.99);color:#000080">867250</div>
<div class="t" style="left:538.3px;top:172.04px;transform:translateX(-50%);color:#000080">S2</div>
<div class="t" style="left:594.5px;top:172.04px;transform:translateX(-50%);color:#000080">1</div>
<div class="t" style="left:78.1px;top:193.04px;transform:translateX(-50%) scaleX(0.91);color:#000080">64.7F.F3.6F.A3.8B.6C.63</div>
<div class="t" style="left:323.1px;top:193.04px;transform:translateX(-50%) scaleX(0.98);color:#000080">0x00144310</div>
<div class="t" style="left:391.0px;top:193.04px;transform:translateX(-50%);color:#000080">12</div>
<div class="t" style="left:428.5px;top:193.04px;transform:translateX(-50%);color:#000080">128</div>
<div class="t" style="left:478.1px;top:193.04px;transform:translateX(-50%) scaleX(0.99);color:#000080">867250</div>
<div class="t" style="left:538.3px;top:193.04px;transform:translateX(-50%);color:#000080">S2</div>
<div class="t" style="left:594.5px;top:193.04px;transform:translateX(-50%);color:#000080">1</div>
<div class="t" style="left:78.1px;top:214.04px;transform:translateX(-50%) scaleX(0.91);color:#000080">6F.54.60.49.AA.B4.2E.08</div>
<div class="t" style="left:323.1px;top:214.04px;transform:translateX(-50%) scaleX(0.98);color:#000080">0x00144310</div>
<div class="t" style="left:391.0px;top:214.04px;transform:translateX(-50%);color:#000080">12</div>
<div class="t" style="left:428.5px;top:214.04px;transform:translateX(-50%);color:#000080">128</div>
<div class="t" style="left:478.1px;top:214.04px;transform:translateX(-50%) scaleX(0.99);color:#000080">867250</div>
<div class="t" style="left:538.3px;top:214.04px;transform:translateX(-50%);color:#000080">S2</div>
<div class="t" style="left:594.5px;top:214.04px;transform:translateX(-50%);color:#000080">1</div>
<div class="t" style="left:78.1px;top:235.04px;transform:translateX(-50%) scaleX(0.91);color:#000080">83.3B.F1.F3.A6.9D.1C.09</div>
<div class="t" style="left:323.1px;top:235.04px;transform:translateX(-50%) scaleX(0.98);color:#000080">0x00144310</div>
<div class="t" style="left:391.0px;top:235.04px;transform:translateX(-50%);color:#000080">12</div>
<div class="t" style="left:428.5px;top:235.04px;transform:translateX(-50%);color:#000080">128</div>
<div class="t" style="left:478.1px;top:235.04px;transform:translateX(-50%) scaleX(0.99);color:#000080">867250</div>
<div class="t" style="left:538.3px;top:235.04px;transform:translateX(-50%);color:#000080">S2</div>
<div class="t" style="left:594.5px;top:235.04px;transform:translateX(-50%);color:#000080">1</div>
<div class="t" style="left:78.1px;top:256.04px;transform:translateX(-50%) scaleX(0.91);color:#000080">5A.43.4F.4E.F2.1C.06.59</div>
<div class="t" style="left:323.1px;top:256.04px;transform:translateX(-50%) scaleX(0.98);color:#000080">0x00144310</div>
<div class="t" style="left:391.0px;top:256.04px;transform:translateX(-50%);color:#000080">12</div>
<div class="t" style="left:428.5px;top:256.04px;transform:translateX(-50%);color:#000080">128</div>
<div class="t" style="left:478.1px;top:256.04px;transform:translateX(-50%) scaleX(0.99);color:#000080">867250</div>
<div class="t" style="left:538.3px;top:256.04px;transform:translateX(-50%);color:#000080">S2</div>
<div class="t" style="left:594.5px;top:256.04px;transform:translateX(-50%);color:#000080">1</div>
<div class="t" style="left:78.1px;top:277.04px;transform:translateX(-50%) scaleX(0.91);color:#000080">8A.CB.3D.B5.3F.08.CE.E4</div>
<div class="t" style="left:323.1px;top:277.04px;transform:translateX(-50%) scaleX(0.98);color:#000080">0x00144310</div>
<div class="t" style="left:391.0px;top:277.04px;transform:translateX(-50%);color:#000080">12</div>
<div class="t" style="left:428.5px;top:277.04px;transform:translateX(-50%);color:#000080">128</div>
<div class="t" style="left:478.1px;top:277.04px;transform:translateX(-50%) scaleX(0.99);color:#000080">867250</div>
<div class="t" style="left:538.3px;top:277.04px;transform:translateX(-50%);color:#000080">S2</div>
<div class="t" style="left:594.5px;top:277.04px;transform:translateX(-50%);color:#000080">1</div>
<div class="t" style="left:78.1px;top:298.04px;transform:translateX(-50%) scaleX(0.91);color:#000080">B6.B3.34.1F.D0.FF.38.38</div>
<div class="t" style="left:323.1px;top:298.04px;transform:translateX(-50%) scaleX(0.98);color:#000080">0x00144310</div>
<div class="t" style="left:391.0px;top:298.04px;transform:translateX(-50%);color:#000080">12</div>
<div class="t" style="left:428.5px;top:298.04px;transform:translateX(-50%);color:#000080">128</div>
<div class="t" style="left:478.1px;top:298.04px;transform:translateX(-50%) scaleX(0.99);color:#000080">867250</div>
<div class="t" style="left:538.3px;top:298.04px;transform:translateX(-50%);color:#000080">S2</div>
<div class="t" style="left:594.5px;top:298.04px;transform:translateX(-50%);color:#000080">1</div>
<div class="t" style="left:78.1px;top:319.04px;transform:translateX(-50%) scaleX(0.91);color:#000080">26.2E.EE.C6.9C.7C.FD.1A</div>
<div class="t" style="left:323.1px;top:319.04px;transform:translateX(-50%) scaleX(0.98);color:#000080">0x00144310</div>
<div class="t" style="left:391.0px;top:319.04px;transform:translateX(-50%);color:#000080">12</div>
<div class="t" style="left:428.5px;top:319.04px;transform:translateX(-50%);color:#000080">128</div>
<div class="t" style="left:478.1px;top:319.04px;transform:translateX(-50%) scaleX(0.99);color:#000080">867250</div>
<div class="t" style="left:538.3px;top:319.04px;transform:translateX(-50%);color:#000080">S2</div>
<div class="t" style="left:594.5px;top:319.04px;transform:translateX(-50%);color:#000080">1</div>
<div class="t" style="left:78.1px;top:340.04px;transform:translateX(-50%) scaleX(0.91);color:#000080">44.DC.79.35.3D.F0.CE.99</div>
<div class="t" style="left:323.1px;top:340.04px;transform:translateX(-50%) scaleX(0.98);color:#000080">0x00144310</div>
<div class="t" style="left:391.0px;top:340.04px;transform:translateX(-50%);color:#000080">12</div>
<div class="t" style="left:428.5px;top:340.04px;transform:translateX(-50%);color:#000080">128</div>
<div class="t" style="left:478.1px;top:340.04px;transform:translateX(-50%) scaleX(0.99);color:#000080">867250</div>
<div class="t" style="left:538.3px;top:340.04px;transform:translateX(-50%);color:#000080">S2</div>
<div class="t" style="left:594.5px;top:340.04px;transform:translateX(-50%);color:#000080">1</div>
<div class="t" style="left:78.1px;top:361.04px;transform:translateX(-50%) scaleX(0.91);color:#000080">C6.D9.7C.AC.32.1C.9F.8E</div>
<div class="t" style="left:323.1px;top:361.04px;transform:translateX(-50%) scaleX(0.98);color:#000080">0x00144310</div>
<div class="t" style="left:391.0px;top:361.04px;transform:translateX(-50%);color:#000080">12</div>
<div class="t" style="left:428.5px;top:361.04px;transform:translateX(-50%);color:#000080">128</div>
<div class="t" style="left:478.1px;top:361.04px;transform:translateX(-50%) scaleX(0.99);color:#000080">867250</div>
<div class="t" style="left:538.3px;top:361.04px;transform:translateX(-50%);color:#000080">S2</div>
<div class="t" style="left:594.5px;top:361.04px;transform:translateX(-50%);color:#000080">1</div>
<div class="t" style="left:78.1px;top:382.04px;transform:translateX(-50%) scaleX(0.91);color:#000080">AF.28.9D.20.A4.AE.0E.1C</div>
<div class="t" style="left:323.1px;top:382.04px;transform:translateX(-50%) scaleX(0.98);color:#000080">0x00144310</div>
<div class="t" style="left:391.0px;top:382.04px;transform:translateX(-50%);color:#000080">12</div>
<div class="t" style="left:428.5px;top:382.04px;transform:translateX(-50%);color:#000080">128</div>
<div class="t" style="left:478.1px;top:382.04px;transform:translateX(-50%) scaleX(0.99);color:#000080">867250</div>
<div class="t" style="left:538.3px;top:382.04px;transform:translateX(-50%);color:#000080">S2</div>
<div class="t" style="left:594.5px;top:382.04px;transform:translateX(-50%);color:#000080">1</div>
</div>
<div style="left:1648px;top:76px;width:17px;height:424px;background:#f0f0f0"></div>
<div style="left:1648px;top:93px;width:17px;height:322px;background:#cdcdcd"></div>
<svg style="left:1651px;top:81px" width="11" height="7"><path d="M1 6L5.5 1.5L10 6" stroke="#a0a0a0" stroke-width="1.2" fill="none"/></svg>
<svg style="left:1651px;top:488px" width="11" height="7"><path d="M1 1L5.5 5.5L10 1" stroke="#a0a0a0" stroke-width="1.2" fill="none"/></svg>
<div style="left:1051px;top:500px;width:597px;height:17px;background:#f0f0f0"></div>
<div style="left:1068px;top:500px;width:116px;height:17px;background:#cdcdcd"></div>
<div style="left:1649px;top:501px;width:16px;height:16px;background:#f0f0f0"></div>
<svg style="left:1056px;top:503px" width="7" height="11"><path d="M6 1L1.5 5.5L6 10" stroke="#a0a0a0" stroke-width="1.2" fill="none"/></svg>
<svg style="left:1636px;top:503px" width="7" height="11"><path d="M1 1L5.5 5.5L1 10" stroke="#a0a0a0" stroke-width="1.2" fill="none"/></svg>
<div style="left:991px;top:527px;width:679px;height:210px;border:1px solid #acacac;box-sizing:border-box;background:#fff"></div>
<div style="left:994px;top:530px;width:672px;height:207px;border:1px solid #828790;box-sizing:border-box;background:#fff"></div>
<div class="t" style="top:534.04px;font-size:12px;line-height:12px;font-weight:400;color:#0000ff;left:999.40px;transform-origin:0 0;transform:scaleX(0.9844);">09:47:04,748 File Nombre de la planta loaded!</div>
<div class="t" style="top:550.04px;font-size:12px;line-height:12px;font-weight:400;color:#0000ff;left:999.40px;transform-origin:0 0;transform:scaleX(0.9418);">09:49:05,279 Executing  Getting CBTBs To GWs. GWs: 1, Total: 1</div>
<div class="t" style="top:566.04px;font-size:12px;line-height:12px;font-weight:400;color:#0000ff;left:999.40px;transform-origin:0 0;transform:scaleX(0.9347);">09:49:05,403 CBTB GW 1, 23 elements...</div>
<div class="t" style="top:582.04px;font-size:12px;line-height:12px;font-weight:400;color:#008000;left:999.40px;transform-origin:0 0;transform:scaleX(0.9520);">09:49:10,497 Work Getting CBTBs To GWs. GWs: 1, Total: 1 finished!</div>
<div class="t" style="top:630.04px;font-size:12px;line-height:12px;font-weight:400;color:#0000ff;left:999.40px;transform-origin:0 0;transform:scaleX(0.9320);">11:48:07,153 Executing  Service file to SELECTED GWs To GWs. GWs: 1, Total: 1</div>
<div class="t" style="top:645.04px;font-size:12px;line-height:12px;font-weight:400;color:#008000;left:999.40px;transform-origin:0 0;transform:scaleX(0.9411);">11:48:12,565 Work Service file to SELECTED GWs To GWs. GWs: 1, Total: 1 finished!</div>
<div style="left:169px;top:23px;width:91px;height:23px;background:#0078d7;border:3px solid #ff0000;border-radius:2px;box-sizing:border-box"></div>
<div class="t" style="top:30.04px;font-size:12px;line-height:12px;font-weight:400;color:#fff;left:192.40px;transform-origin:0 0;transform:scaleX(0.9704);">GW files</div>
<div style="left:170px;top:44px;width:124px;height:88px;background:#555;opacity:0.85"></div>
<div style="left:170px;top:44px;width:122px;height:86px;background:#fff;border:1px solid #a0a0a0;box-sizing:border-box"></div>
<div class="t" style="top:49.04px;font-size:12px;line-height:12px;font-weight:400;color:#000;left:188.30px;transform-origin:0 0;transform:scaleX(0.9417);">Download CBTBs</div>
<div class="t" style="top:71.04px;font-size:12px;line-height:12px;font-weight:400;color:#000;left:188.10px;transform-origin:0 0;transform:scaleX(0.9285);">Upload CBTBs</div>
<div style="left:169px;top:86px;width:125px;height:24px;background:#0078d7;border:3px solid #ff0000;border-radius:2px;box-sizing:border-box"></div>
<div class="t" style="top:93.04px;font-size:12px;line-height:12px;font-weight:400;color:#fff;left:187.90px;transform-origin:0 0;transform:scaleX(0.9906);">Upload Firmware</div>
<div class="t" style="top:115.04px;font-size:12px;line-height:12px;font-weight:400;color:#000;left:187.90px;transform-origin:0 0;transform:scaleX(0.9745);">Upload Service</div>
</body></html>
